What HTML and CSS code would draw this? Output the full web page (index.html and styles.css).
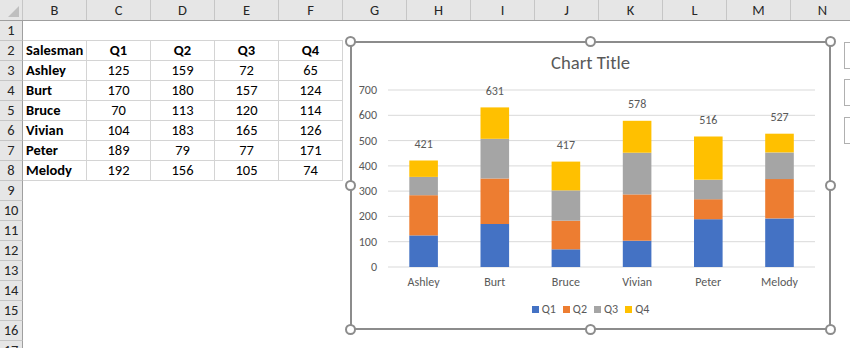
FILE: index.html
```html
<!DOCTYPE html>
<html lang="en">
<head>
    <meta charset="UTF-8">
    <meta name="viewport" content="width=device-width, initial-scale=1.0">
    <title>Sales by Quarter</title>
    <link rel="stylesheet" href="styles.css">
</head>
<body>
    <div class="sheet">
        <div class="head-row">
            <div class="corner">
                <svg width="22" height="20"><polygon points="19,6 19,17 8,17" fill="#bfbfbf"/></svg>
            </div>
            <div class="col-head">B</div>
            <div class="col-head">C</div>
            <div class="col-head">D</div>
            <div class="col-head">E</div>
            <div class="col-head">F</div>
            <div class="col-head">G</div>
            <div class="col-head">H</div>
            <div class="col-head">I</div>
            <div class="col-head">J</div>
            <div class="col-head">K</div>
            <div class="col-head">L</div>
            <div class="col-head">M</div>
            <div class="col-head">N</div>
        </div>
        <div class="row">
            <div class="row-head">1</div>
            <div class="cell edge"></div><div class="cell edge"></div><div class="cell edge"></div><div class="cell edge"></div><div class="cell edge"></div>
        </div>
        <div class="row">
            <div class="row-head">2</div>
            <div class="cell b name">Salesman</div>
            <div class="cell b bold">Q1</div>
            <div class="cell b bold">Q2</div>
            <div class="cell b bold">Q3</div>
            <div class="cell b bold">Q4</div>
        </div>
        <div class="row">
            <div class="row-head">3</div>
            <div class="cell b name">Ashley</div>
            <div class="cell b">125</div><div class="cell b">159</div><div class="cell b">72</div><div class="cell b">65</div>
        </div>
        <div class="row">
            <div class="row-head">4</div>
            <div class="cell b name">Burt</div>
            <div class="cell b">170</div><div class="cell b">180</div><div class="cell b">157</div><div class="cell b">124</div>
        </div>
        <div class="row">
            <div class="row-head">5</div>
            <div class="cell b name">Bruce</div>
            <div class="cell b">70</div><div class="cell b">113</div><div class="cell b">120</div><div class="cell b">114</div>
        </div>
        <div class="row">
            <div class="row-head">6</div>
            <div class="cell b name">Vivian</div>
            <div class="cell b">104</div><div class="cell b">183</div><div class="cell b">165</div><div class="cell b">126</div>
        </div>
        <div class="row">
            <div class="row-head">7</div>
            <div class="cell b name">Peter</div>
            <div class="cell b">189</div><div class="cell b">79</div><div class="cell b">77</div><div class="cell b">171</div>
        </div>
        <div class="row">
            <div class="row-head">8</div>
            <div class="cell b name">Melody</div>
            <div class="cell b">192</div><div class="cell b">156</div><div class="cell b">105</div><div class="cell b">74</div>
        </div>
        <div class="row"><div class="row-head">9</div></div>
        <div class="row"><div class="row-head">10</div></div>
        <div class="row"><div class="row-head">11</div></div>
        <div class="row"><div class="row-head">12</div></div>
        <div class="row"><div class="row-head">13</div></div>
        <div class="row"><div class="row-head">14</div></div>
        <div class="row"><div class="row-head">15</div></div>
        <div class="row"><div class="row-head">16</div></div>
        <div class="row"><div class="row-head">17</div></div>

        <div class="chart">
            <div class="chart-title">Chart Title</div>
            <svg id="plot" width="477" height="220"></svg>
            <div class="legend">
                <span class="key"><i class="sw q1"></i>Q1</span>
                <span class="key"><i class="sw q2"></i>Q2</span>
                <span class="key"><i class="sw q3"></i>Q3</span>
                <span class="key"><i class="sw q4"></i>Q4</span>
            </div>
            <span class="handle tl"></span>
            <span class="handle tm"></span>
            <span class="handle tr"></span>
            <span class="handle ml"></span>
            <span class="handle mr"></span>
            <span class="handle bl"></span>
            <span class="handle bm"></span>
            <span class="handle br"></span>
        </div>

        <div class="chart-btn first"></div>
        <div class="chart-btn second"></div>
        <div class="chart-btn third"></div>
    </div>
    <script>
        const names = ['Ashley', 'Burt', 'Bruce', 'Vivian', 'Peter', 'Melody'];
        const data = [
            [125, 159, 72, 65],
            [170, 180, 157, 124],
            [70, 113, 120, 114],
            [104, 183, 165, 126],
            [189, 79, 77, 171],
            [192, 156, 105, 74]
        ];
        const colors = ['#4472c4', '#ed7d31', '#a5a5a5', '#ffc000'];

        const base = 192;
        const scale = 0.25286;
        const step = 71.17;
        let out = '';

        for (let v = 0; v <= 700; v += 100) {
            const y = (base - v * scale).toFixed(1);
            out += `<line x1="36" x2="463" y1="${y}" y2="${y}" stroke="#d9d9d9" stroke-width="1"/>`;
            out += `<text class="axis" x="25" y="${y}" text-anchor="end" dominant-baseline="central">${v}</text>`;
        }

        for (let i = 0; i < names.length; i++) {
            const cx = 71.6 + i * step;
            const x = cx - 14.3;
            let top = base;
            let total = 0;
            data[i].forEach(function(val, q) {
                const h = val * scale;
                top -= h;
                total += val;
                out += `<rect x="${x.toFixed(1)}" y="${top.toFixed(1)}" width="28.6" height="${h.toFixed(1)}" fill="${colors[q]}"/>`;
            });
            out += `<text class="axis" x="${cx.toFixed(1)}" y="${(top - 16.5).toFixed(1)}" text-anchor="middle" dominant-baseline="central">${total}</text>`;
            out += `<text class="axis" x="${cx.toFixed(1)}" y="207" text-anchor="middle" dominant-baseline="central">${names[i]}</text>`;
        }

        document.getElementById('plot').innerHTML = out;
    </script>
</body>
</html>
```
FILE: styles.css
```css
body {
    margin: 0;
    font-family: Carlito, "Liberation Sans", Arial, sans-serif;
    background-color: #fff;
    overflow: hidden;
}
.sheet {
    position: relative;
    width: 850px;
    height: 348px;
    overflow: hidden;
}
.head-row {
    display: flex;
    height: 21px;
    background-color: #e6e6e6;
    border-bottom: 1px solid #9f9f9f;
    box-sizing: border-box;
}
.corner {
    flex: none;
    width: 23px;
    box-sizing: border-box;
    border-right: 1px solid #c6c6c6;
}
.corner svg {
    display: block;
}
.col-head {
    flex: none;
    width: 64px;
    box-sizing: border-box;
    border-right: 1px solid #c6c6c6;
    text-align: center;
    line-height: 20px;
    font-size: 14.5px;
    color: #262626;
}
.row {
    display: flex;
    height: 20px;
}
.row-head {
    flex: none;
    width: 23px;
    box-sizing: border-box;
    background-color: #e6e6e6;
    border-right: 1px solid #9f9f9f;
    border-bottom: 1px solid #c6c6c6;
    text-align: center;
    line-height: 19px;
    font-size: 14.5px;
    color: #262626;
}
.cell {
    flex: none;
    width: 64px;
    box-sizing: border-box;
    line-height: 19px;
    font-size: 14.5px;
    text-align: center;
    color: #000;
    white-space: nowrap;
}
.cell.edge {
    border-bottom: 1px solid #d4d4d4;
}
.cell.b {
    border-right: 1px solid #d4d4d4;
    border-bottom: 1px solid #d4d4d4;
}
.cell.name {
    text-align: left;
    padding-left: 3px;
    font-weight: bold;
}
.cell.bold {
    font-weight: bold;
}
.chart {
    position: absolute;
    left: 350px;
    top: 41px;
    width: 481px;
    height: 289px;
    box-sizing: border-box;
    border: 2px solid #8c8c8c;
    background-color: #fff;
}
.chart-title {
    padding-top: 8px;
    line-height: 24px;
    font-size: 18.7px;
    text-align: center;
    color: #595959;
}
#plot {
    display: block;
}
#plot .axis {
    font-family: Carlito, "Liberation Sans", Arial, sans-serif;
    font-size: 12px;
    fill: #595959;
}
.legend {
    display: flex;
    justify-content: center;
    gap: 7px;
    margin-top: 6px;
    line-height: 16px;
    font-size: 12px;
    color: #595959;
}
.key {
    display: flex;
    align-items: center;
    gap: 3px;
}
.sw {
    display: block;
    width: 7px;
    height: 7px;
}
.sw.q1 { background-color: #4472c4; }
.sw.q2 { background-color: #ed7d31; }
.sw.q3 { background-color: #a5a5a5; }
.sw.q4 { background-color: #ffc000; }
.handle {
    position: absolute;
    width: 11px;
    height: 11px;
    box-sizing: border-box;
    border: 2px solid #8c8c8c;
    border-radius: 50%;
    background-color: #fff;
}
.handle.tl { left: -7px; top: -7px; }
.handle.tm { left: calc(50% - 5.5px); top: -7px; }
.handle.tr { right: -7px; top: -7px; }
.handle.ml { left: -7px; top: calc(50% - 5.5px); }
.handle.mr { right: -7px; top: calc(50% - 5.5px); }
.handle.bl { left: -7px; bottom: -7px; }
.handle.bm { left: calc(50% - 5.5px); bottom: -7px; }
.handle.br { right: -7px; bottom: -7px; }
.chart-btn {
    position: absolute;
    left: 844px;
    width: 26px;
    height: 27px;
    box-sizing: border-box;
    border: 1px solid #b0b0b0;
    background-color: #fff;
}
.chart-btn.first { top: 42px; }
.chart-btn.second { top: 79px; }
.chart-btn.third { top: 117px; }
```
